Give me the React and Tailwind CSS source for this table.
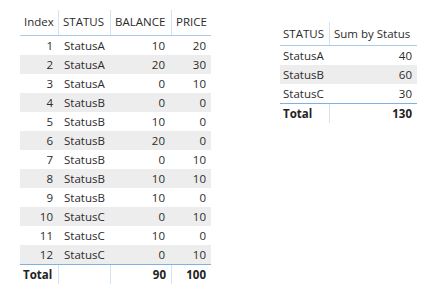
import React from "react";

const detailRows = [
  [1, "StatusA", 10, 20],
  [2, "StatusA", 20, 30],
  [3, "StatusA", 0, 10],
  [4, "StatusB", 0, 0],
  [5, "StatusB", 10, 0],
  [6, "StatusB", 20, 0],
  [7, "StatusB", 0, 10],
  [8, "StatusB", 10, 10],
  [9, "StatusB", 10, 0],
  [10, "StatusC", 0, 10],
  [11, "StatusC", 10, 0],
  [12, "StatusC", 0, 10],
];

const summaryRows = [
  ["StatusA", 40],
  ["StatusB", 60],
  ["StatusC", 30],
];

const font = { fontFamily: '"Open Sans", "Noto Sans", sans-serif' };

// Header and total cells carry a column separator; body cells do not.
function Cell({ w, right, sep, bold, children, className = "" }) {
  return (
    <div
      className={`${w} shrink-0 h-full flex items-center px-[5px] whitespace-nowrap overflow-hidden ${
        right ? "justify-end" : "justify-start"
      } ${sep ? "border-l border-[#d3e3f2]" : ""} ${bold ? "font-bold" : ""} ${className}`}
    >
      {children}
    </div>
  );
}

function DetailTable() {
  return (
    <div className="w-[191px] text-[11.5px] text-[#2b2b2b]">
      <div className="flex h-[26px] border-b border-[#a9cbe9] items-stretch">
        <Cell w="w-[38px]" className="items-start pt-[3px] pl-[4px]">Index</Cell>
        <Cell w="w-[52px]" sep className="items-start pt-[3px] pl-[4px]">STATUS</Cell>
        <Cell w="w-[61px]" sep className="items-start pt-[3px] pl-[4px]">BALANCE</Cell>
        <Cell w="w-[40px]" sep className="items-start pt-[3px] pl-[4px]">PRICE</Cell>
      </div>
      {detailRows.map(([i, s, b, p], idx) => (
        <div
          key={i}
          className={`flex h-[19px] ${idx % 2 === 1 ? "bg-[#eeeded]" : "bg-white"}`}
        >
          <Cell w="w-[38px]" right>{i}</Cell>
          <Cell w="w-[52px]" className="pl-[6px]">{s}</Cell>
          <Cell w="w-[61px]" right className="pr-[6px]">{b}</Cell>
          <Cell w="w-[40px]" right>{p}</Cell>
        </div>
      ))}
      <div className="flex h-[20px] border-t border-[#7fb2df] text-[#222]">
        <Cell w="w-[38px]" bold className="pl-[3px]">Total</Cell>
        <Cell w="w-[52px]" sep></Cell>
        <Cell w="w-[61px]" sep right bold>90</Cell>
        <Cell w="w-[40px]" sep right bold>100</Cell>
      </div>
    </div>
  );
}

function SummaryTable() {
  return (
    <div className="w-[137px] text-[11.5px] text-[#2b2b2b]">
      <div className="flex h-[24px] border-b border-[#a9cbe9]">
        <Cell w="w-[49px]" className="items-start pt-[3px] pl-[3px]">STATUS</Cell>
        <Cell w="w-[88px]" sep className="items-start pt-[3px] pl-[4px]">Sum by Status</Cell>
      </div>
      {summaryRows.map(([s, v], idx) => (
        <div
          key={s}
          className={`flex h-[19px] ${idx % 2 === 1 ? "bg-[#eeeded]" : "bg-white"}`}
        >
          <Cell w="w-[49px]" className="pl-[3px]">{s}</Cell>
          <Cell w="w-[88px]" right>{v}</Cell>
        </div>
      ))}
      <div className="flex h-[20px] border-t border-[#7fb2df] text-[#222]">
        <Cell w="w-[49px]" bold className="pl-[3px]">Total</Cell>
        <Cell w="w-[88px]" sep right bold>130</Cell>
      </div>
    </div>
  );
}

export default function App() {
  return (
    <div className="w-[437px] h-[306px] bg-white flex items-start" style={font}>
      <div className="ml-[20px] mt-[10px]">
        <DetailTable />
      </div>
      <div className="ml-[69px] mt-[22px]">
        <SummaryTable />
      </div>
    </div>
  );
}
